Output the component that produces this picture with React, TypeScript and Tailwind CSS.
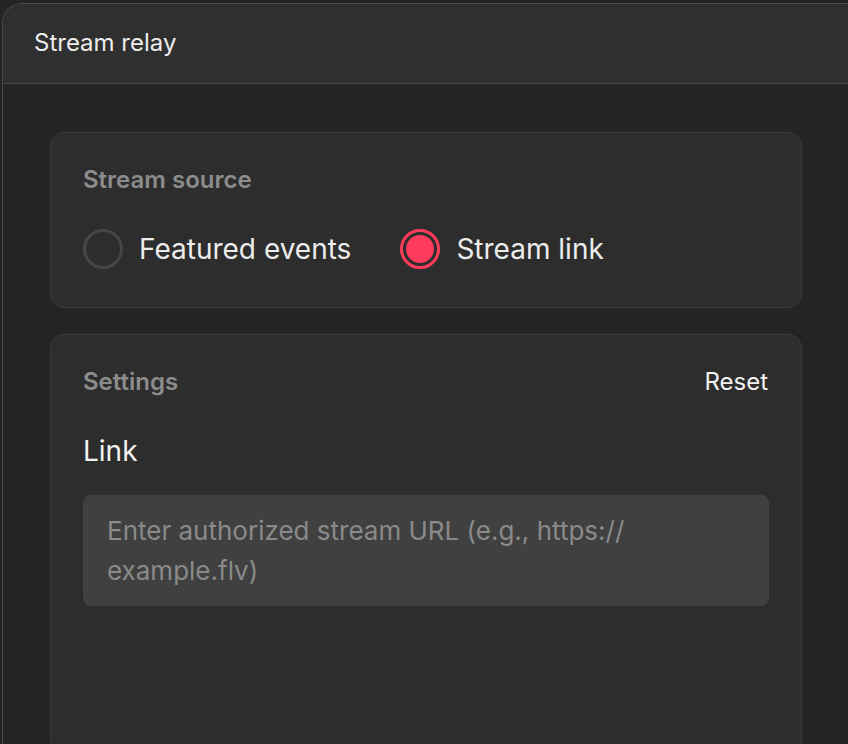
// Stream relay settings panel

import { useState } from 'react';

type Source = 'featured' | 'link';

function Radio({ checked, label, onClick }: { checked: boolean; label: string; onClick: () => void }) {
  return (
    <button type="button" onClick={onClick} className="flex items-center gap-4">
      {checked ? (
        <span className="w-10 h-10 rounded-full border-[3px] border-[#ff3b5c] flex items-center justify-center">
          <span className="w-7 h-7 rounded-full bg-[#ff3b5c]" />
        </span>
      ) : (
        <span className="w-10 h-10 rounded-full border-[3px] border-[#464646]" />
      )}
      <span className="text-[28px] leading-9 text-[#ececec]">{label}</span>
    </button>
  );
}

export default function App() {
  const [source, setSource] = useState<Source>('link');
  const [link, setLink] = useState('');

  return (
    <div className="min-h-[744px] w-full overflow-hidden bg-[#242424] pl-[2px] pt-[3px]" style={{ fontFamily: 'Inter, "Noto Sans", sans-serif' }}>
      <div className="w-[880px] h-[741px] rounded-tl-[20px] border-l border-t border-[#4a4a4a] bg-[#242424] overflow-hidden">
        {/* header */}
        <div className="h-[80px] bg-[#2f2f2f] border-b border-[#474747] flex items-center pl-[31px] pb-[1px]">
          <h1 className="text-[24px] text-[#ececec]">Stream relay</h1>
        </div>

        {/* body */}
        <div className="pt-[48px] pl-[47px] w-[799px] flex flex-col gap-[26px]">
          <section className="rounded-[14px] border border-[#3b3b3b] bg-[#2d2d2d] px-8 pt-[33px] pb-[38px]">
            <h2 className="text-[24px] leading-7 font-semibold text-[#8c8c8c]">Stream source</h2>
            <div className="mt-[35px] flex items-center gap-[49px]">
              <Radio checked={source === 'featured'} label="Featured events" onClick={() => setSource('featured')} />
              <Radio checked={source === 'link'} label="Stream link" onClick={() => setSource('link')} />
            </div>
          </section>

          <section className="rounded-[14px] border border-[#3b3b3b] bg-[#2d2d2d] px-8 pt-[33px] h-[420px]">
            <div className="flex items-center justify-between">
              <h2 className="text-[24px] leading-7 font-semibold text-[#8c8c8c]">Settings</h2>
              <button type="button" onClick={() => setLink('')} className="mr-[1px] text-[24px] leading-7 text-[#f2f2f2]">Reset</button>
            </div>
            <label className="block mt-[37px] text-[28px] leading-9 text-[#f2f2f2]">Link</label>
            <textarea
              value={link}
              onChange={e => setLink(e.target.value)}
              placeholder={'Enter authorized stream URL (e.g., https://\nexample.flv)'}
              className="mt-[26px] block w-full h-[111px] resize-none rounded-lg bg-[#404040] px-6 pt-4 text-[26px] leading-10 text-[#ececec] placeholder:text-[#8a8a8a] outline-none"
            />
          </section>
        </div>
      </div>
    </div>
  );
}
